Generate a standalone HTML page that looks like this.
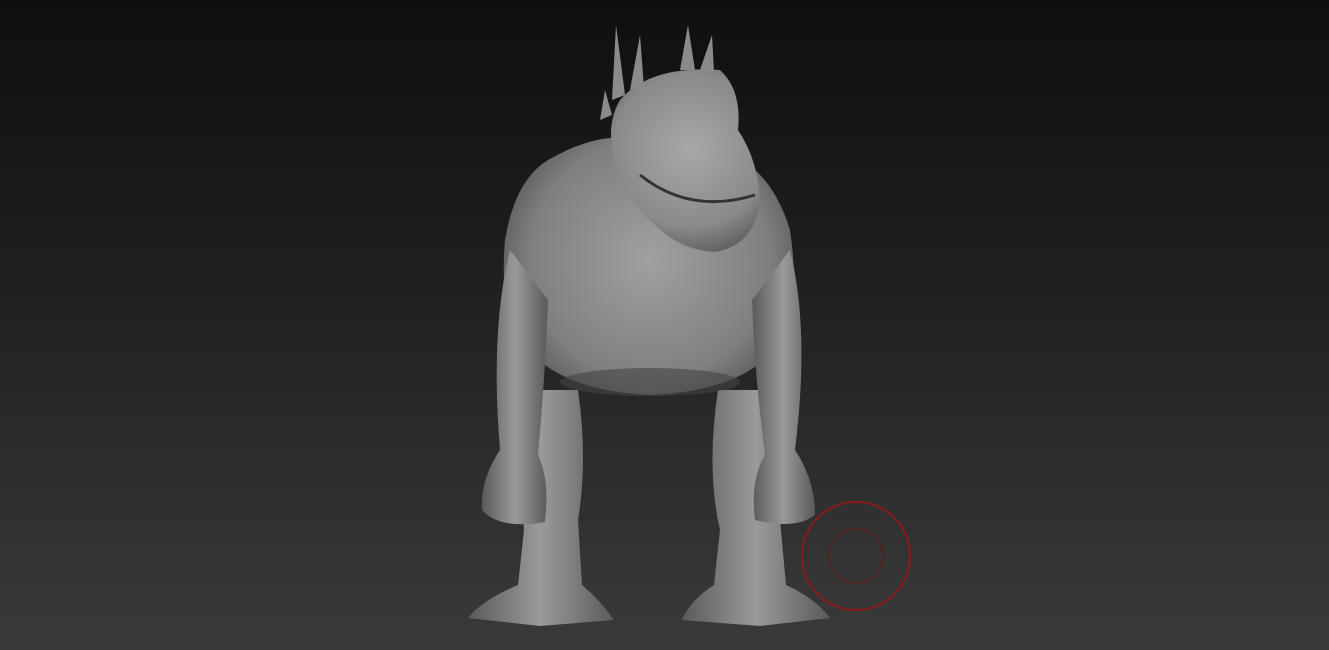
<!DOCTYPE html>
<html><head><meta charset="utf-8"><style>
html,body{margin:0;padding:0;width:1329px;height:650px;overflow:hidden}
body{background:linear-gradient(to bottom,#0f0f0f 0%,#1c1c1c 35%,#2c2c2c 70%,#3a3a3a 100%)}
svg{position:absolute;left:0;top:0}
</style></head><body>
<svg width="1329" height="650" viewBox="0 0 1329 650">
<defs>
<radialGradient id="g" cx="650" cy="260" r="170" gradientUnits="userSpaceOnUse">
<stop offset="0" stop-color="#a0a0a0"/><stop offset="0.7" stop-color="#808080"/><stop offset="1" stop-color="#505050"/>
</radialGradient>
<radialGradient id="h" cx="690" cy="150" r="110" gradientUnits="userSpaceOnUse">
<stop offset="0" stop-color="#a8a8a8"/><stop offset="0.7" stop-color="#8a8a8a"/><stop offset="1" stop-color="#5a5a5a"/>
</radialGradient>
<linearGradient id="l" x1="0" y1="0" x2="1" y2="0">
<stop offset="0" stop-color="#5a5a5a"/><stop offset="0.5" stop-color="#9a9a9a"/><stop offset="1" stop-color="#5a5a5a"/>
</linearGradient>
</defs>
<!-- legs -->
<path d="M530 390 Q518 470 524 530 L518 585 Q482 600 468 618 L540 626 L614 620 Q600 600 582 585 L578 520 Q588 460 578 390 Z" fill="url(#l)"/>
<path d="M718 390 Q706 470 720 530 L714 585 Q690 600 682 620 L760 626 L830 618 Q815 598 786 585 L780 520 Q790 460 782 390 Z" fill="url(#l)"/>
<!-- body -->
<path d="M548 160 Q600 130 640 140 L720 150 Q770 165 790 230 Q800 300 785 330 Q760 390 650 395 Q545 390 515 330 Q500 300 505 240 Q515 180 548 160 Z" fill="url(#g)"/>
<!-- arms -->
<path d="M510 250 Q490 330 500 450 Q480 480 482 510 Q500 530 545 522 Q550 480 538 455 Q545 380 548 300 Z" fill="url(#l)"/>
<path d="M790 250 Q810 330 795 450 Q815 480 815 515 Q795 530 755 520 Q750 480 765 455 Q755 380 752 300 Z" fill="url(#l)"/>
<!-- head -->
<path d="M620 100 Q650 65 720 70 Q742 90 738 130 Q758 160 760 200 Q755 245 715 252 Q680 250 655 225 Q625 200 615 160 Q605 125 620 100 Z" fill="url(#h)"/>
<!-- spikes -->
<path d="M612 100 L616 25 L625 95 Z M630 90 L640 35 L644 88 Z M680 70 L688 25 L695 70 Z M700 70 L712 35 L714 72 Z M600 120 L605 90 L612 115 Z" fill="#8a8a8a"/>
<path d="M640 175 Q690 215 755 195" stroke="#333" stroke-width="3" fill="none"/>
<ellipse cx="650" cy="382" rx="90" ry="14" fill="#444" opacity="0.6"/>
<!-- brush circle -->
<circle cx="856" cy="556" r="54" fill="none" stroke="#8b1a1a" stroke-width="2"/>
<circle cx="856" cy="556" r="27" fill="none" stroke="#6a1818" stroke-width="1"/>
</svg>
</body></html>
